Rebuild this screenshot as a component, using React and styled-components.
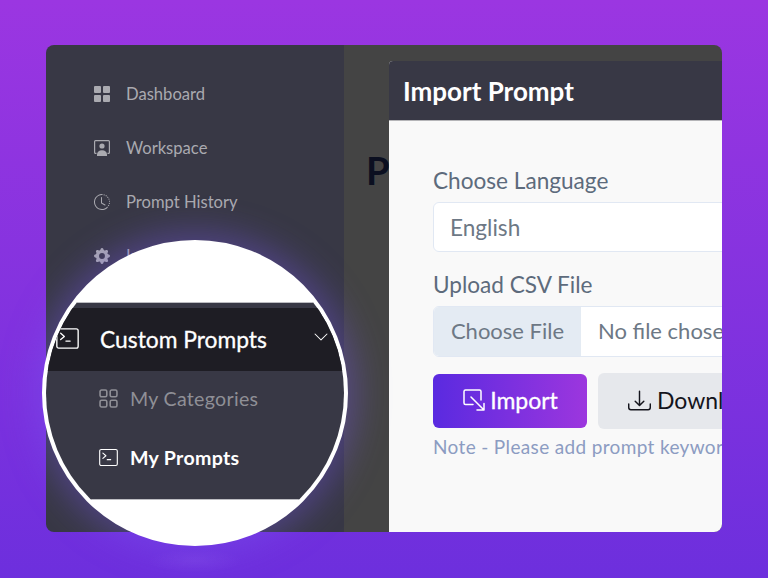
import React from "react";
import styled, { createGlobalStyle } from "styled-components";
import { BsClockHistory, BsGearFill, BsChevronDown, BsDownload } from "react-icons/bs";

const Global = createGlobalStyle`
  html, body { margin: 0; padding: 0; width: 768px; height: 578px; overflow: hidden; }
  * { box-sizing: border-box; }
  body { font-family: Lato, "Noto Sans", sans-serif; }
`;

const Stage = styled.div`
  position: relative;
  width: 768px;
  height: 578px;
  padding: 45px 46px 46px;
  background: linear-gradient(180deg, #9b36e1 0%, #6d2fdd 100%);
  overflow: hidden;
`;
const Card = styled.div`
  display: flex;
  height: 487px;
  border-radius: 8px;
  overflow: hidden;
`;
const Sidebar = styled.nav`
  flex: 0 0 298px;
  display: flex;
  flex-direction: column;
  gap: 30px;
  padding: 37px 0 0 48px;
  background: #383845;
`;
const NavItem = styled.div`
  display: flex;
  align-items: center;
  gap: 16px;
  height: 24px;
  padding-bottom: 1px;
  font-size: 16.6px;
  color: #aaaab0;
  svg { flex: none; width: 16px; height: 16px; }
`;
const Main = styled.main`
  position: relative;
  flex: 1;
  padding: 100px 0 0 22px;
  background: #444444;
`;
const Heading = styled.h1`
  margin: 0;
  font-size: 38px;
  line-height: 50px;
  font-weight: 700;
  color: #0b0f20;
`;
const Modal = styled.section`
  position: absolute;
  top: 16px;
  left: 45px;
  width: 480px;
  bottom: 0;
  display: flex;
  flex-direction: column;
  border-top-left-radius: 4px;
  overflow: hidden;
  background: #f9f9f9;
`;
const ModalHeader = styled.header`
  display: flex;
  align-items: center;
  flex: none;
  height: 60px;
  padding-left: 14px;
  background: #383845;
  border-bottom: 1px solid #b5b5b8;
  font-size: 26px;
  font-weight: 700;
  color: #fff;
`;
const ModalBody = styled.div`
  display: flex;
  flex-direction: column;
  padding: 44px 0 0 44px;
`;
const Label = styled.label`
  height: 32px;
  line-height: 32px;
  font-size: 22.6px;
  color: #5d6b7c;
`;
const Select = styled.div`
  display: flex;
  align-items: center;
  height: 50px;
  margin: 5px 0 17px;
  padding-left: 16px;
  background: #fff;
  border: 1px solid #e1e8f3;
  border-radius: 6px;
  font-size: 22.6px;
  color: #6d7885;
`;
const FileField = styled.div`
  display: flex;
  height: 51px;
  margin-top: 5px;
  background: #fff;
  border: 1px solid #e1e8f3;
  border-radius: 6px;
  overflow: hidden;
  font-size: 22px;
  color: #6d7885;
`;
const FileButton = styled.div`
  display: flex;
  align-items: center;
  justify-content: center;
  flex: 0 0 147px;
  padding-bottom: 3px;
  background: #e4ebf3;
`;
const FileName = styled.div`
  display: flex;
  align-items: center;
  padding: 0 0 3px 17px;
  white-space: nowrap;
`;
const Actions = styled.div`
  display: flex;
  align-items: center;
  gap: 11px;
  margin-top: 16px;
`;
const Button = styled.div`
  display: flex;
  align-items: center;
  justify-content: ${(p) => (p.$primary ? "center" : "flex-start")};
  gap: ${(p) => (p.$primary ? "4px" : "6px")};
  width: ${(p) => (p.$primary ? "154px" : "190px")};
  height: ${(p) => (p.$primary ? "54px" : "56px")};
  padding: 0 0 2px ${(p) => (p.$primary ? "0" : "30px")};
  border-radius: 6px;
  font-size: 23px;
  color: ${(p) => (p.$primary ? "#fff" : "#14141c")};
  -webkit-text-stroke: ${(p) => (p.$primary ? "0.3px #fff" : "0")};
  background: ${(p) => (p.$primary ? "linear-gradient(90deg, #5a2ae0, #9c36de)" : "#e6e8ec")};
  svg { flex: none; }
`;
const Note = styled.p`
  margin: 7px 0 0;
  font-size: 19px;
  line-height: 22px;
  letter-spacing: 0.35px;
  white-space: nowrap;
  color: #8c9cc2;
`;
const Lens = styled.div`
  position: absolute;
  left: 42px;
  top: 240px;
  width: 306px;
  height: 306px;
  padding-top: 58px;
  border: 4px solid #fff;
  border-radius: 50%;
  background: #fff;
  overflow: hidden;
  box-shadow: 0 0 34px 8px rgba(122, 88, 240, 0.38);
`;
const LensBand = styled.div`
  height: 198px;
  background: #383845;
  border-top: 1px solid #bdbdc2;
  border-bottom: 1px solid #bdbdc2;
  padding-top: 5px;
`;
const LensHeader = styled.div`
  display: flex;
  align-items: center;
  height: 63px;
  padding: 0 15px 2px 10px;
  background: #1e1d24;
  color: #fff;
  font-size: 22.8px;
  -webkit-text-stroke: 0.3px #fff;
  > svg:first-child { width: 23px; height: 23px; margin-right: 21px; }
  > svg:last-child { width: 16px; height: 16px; margin-left: auto; margin-bottom: 4px; }
`;
const SubItem = styled.div`
  display: flex;
  align-items: center;
  gap: 12px;
  height: 59px;
  padding: 0 0 4px 53px;
  font-size: 19.6px;
  font-weight: ${(p) => (p.$active ? 700 : 400)};
  letter-spacing: 0.3px;
  color: ${(p) => (p.$active ? "#fff" : "#8f8f96")};
  svg { flex: none; width: 19px; height: 19px; }
`;
const Dither = styled.div`
  position: absolute;
  left: 148px;
  top: 549px;
  width: 94px;
  height: 24px;
  border-radius: 50%;
  background: radial-gradient(closest-side, rgba(140, 90, 235, 0.25), rgba(140, 90, 235, 0));
`;

const ImportIcon = () => (
  <svg width="24" height="24" viewBox="0 0 24 24" fill="none" stroke="#fff" strokeWidth="1.5" strokeLinecap="round" strokeLinejoin="round">
    <path d="M19 12V3.500a1.500 1.500 0 0 0-1.500-1.500H3.500A1.500 1.500 0 0 0 2 3.500V15a1.500 1.500 0 0 0 1.500 1.500H11" />
    <path d="M9 9l13 13M22 15.500V22h-7" />
  </svg>
);
const DashboardIcon = () => (
  <svg viewBox="0 0 16 16" fill="currentColor">
    <rect x="0" y="0" width="7" height="7" rx="1" />
    <rect x="9" y="0" width="7" height="7" rx="1" />
    <rect x="0" y="9" width="7" height="7" rx="1" />
    <rect x="9" y="9" width="7" height="7" rx="1" />
  </svg>
);
const WorkspaceIcon = () => (
  <svg viewBox="0 0 16 16" fill="currentColor">
    <path d="M2.500 14H1.500A1.500 1.500 0 0 1 0 12.500v-11A1.500 1.500 0 0 1 1.500 0h13A1.500 1.500 0 0 1 16 1.500v11a1.500 1.500 0 0 1-1.500 1.500h-1V12.800h1a.3.3 0 0 0 .3-.3v-11a.3.3 0 0 0-.3-.3h-13a.3.3 0 0 0-.3.3v11a.3.3 0 0 0 .3.3h1z" />
    <circle cx="8" cy="6" r="2.600" />
    <path d="M3 16v-1.600C3 12 5 10.200 8 10.200s5 1.800 5 4.200V16z" />
  </svg>
);
const TerminalIcon = () => (
  <svg viewBox="0 0 22 20" fill="none" stroke="currentColor" strokeWidth="1.3" strokeLinecap="round" strokeLinejoin="round">
    <rect x="0.800" y="0.800" width="20.400" height="18.400" rx="1.800" />
    <path d="M4.500 5l3.500 3-3.500 3M9.500 12.500h4" />
  </svg>
);
const CategoriesIcon = () => (
  <svg viewBox="0 0 18 18" fill="none" stroke="currentColor" strokeWidth="1.500">
    <rect x="1" y="1" width="6.400" height="6.400" rx="1.400" />
    <rect x="10.600" y="1" width="6.400" height="6.400" rx="1.400" />
    <rect x="1" y="10.600" width="6.400" height="6.400" rx="1.400" />
    <rect x="10.600" y="10.600" width="6.400" height="6.400" rx="1.400" />
  </svg>
);

export default function App() {
  return (
    <>
      <Global />
      <Stage>
        <Card>
          <Sidebar>
            <NavItem><DashboardIcon />Dashboard</NavItem>
            <NavItem><WorkspaceIcon />Workspace</NavItem>
            <NavItem><BsClockHistory />Prompt History</NavItem>
            <NavItem><BsGearFill />Integrations</NavItem>
          </Sidebar>
          <Main>
            <Heading>Prompts</Heading>
            <Modal>
              <ModalHeader>Import Prompt</ModalHeader>
              <ModalBody>
                <Label>Choose Language</Label>
                <Select>English</Select>
                <Label>Upload CSV File</Label>
                <FileField>
                  <FileButton>Choose File</FileButton>
                  <FileName>No file chosen</FileName>
                </FileField>
                <Actions>
                  <Button $primary><ImportIcon />Import</Button>
                  <Button><BsDownload size={23} />Download</Button>
                </Actions>
                <Note>Note - Please add prompt keywords in the CSV file</Note>
              </ModalBody>
            </Modal>
          </Main>
        </Card>
        <Lens>
          <LensBand>
            <LensHeader><TerminalIcon /><span>Custom Prompts</span><BsChevronDown /></LensHeader>
            <SubItem><CategoriesIcon />My Categories</SubItem>
            <SubItem $active><TerminalIcon />My Prompts</SubItem>
          </LensBand>
        </Lens>
        <Dither />
      </Stage>
    </>
  );
}
